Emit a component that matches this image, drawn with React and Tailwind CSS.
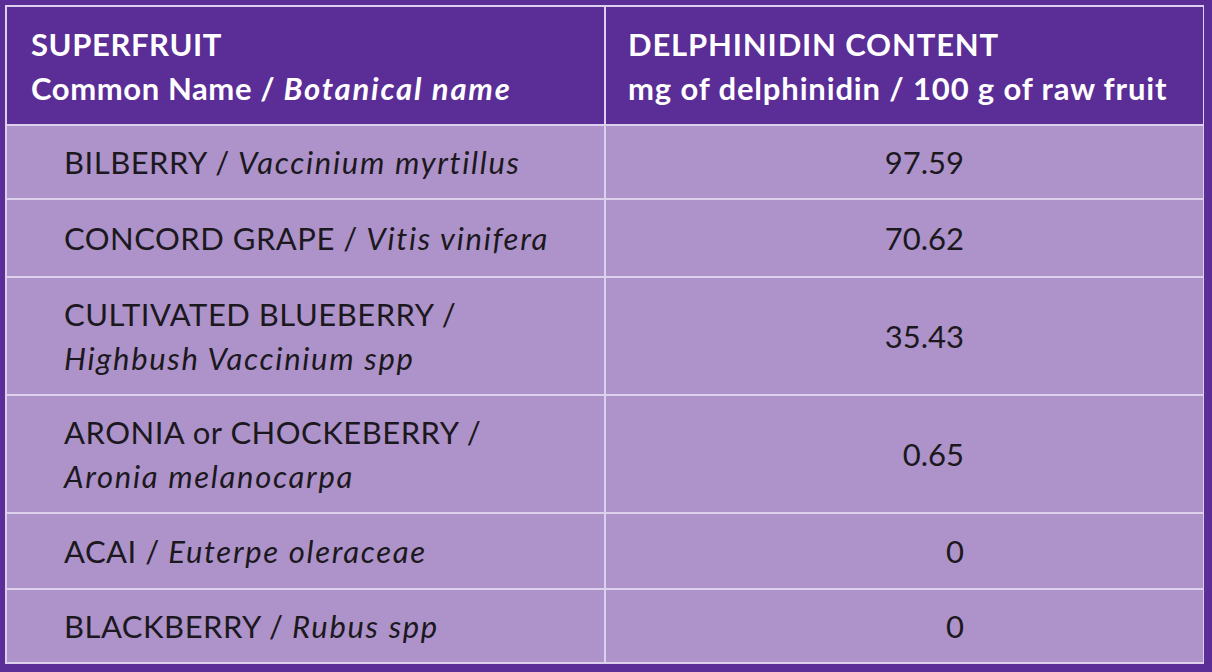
const rows = [
  { name: 'BILBERRY', botanical: 'Vaccinium myrtillus', value: '97.59' },
  { name: 'CONCORD GRAPE', botanical: 'Vitis vinifera', value: '70.62' },
  { name: 'CULTIVATED BLUEBERRY', botanical: 'Highbush Vaccinium spp', value: '35.43', wrap: true },
  { name: 'ARONIA or CHOCKEBERRY', botanical: 'Aronia melanocarpa', value: '0.65', wrap: true },
  { name: 'ACAI', botanical: 'Euterpe oleraceae', value: '0' },
  { name: 'BLACKBERRY', botanical: 'Rubus spp', value: '0' },
];

const App = () => {
  return (
    <div
      className="w-[1212px] h-[672px] bg-[#5b2d96] p-[5px]"
      style={{ fontFamily: 'Lato, "Noto Sans", sans-serif' }}
    >
      <div className="grid grid-cols-[597px_597px] grid-rows-[117px_72px_76px_116px_116px_74px_72px] gap-[2px] p-[2px] bg-[#ddd0ec] w-[1199px]">
        <div className="bg-[#5b2d96] text-white font-bold text-[31px] leading-[44px] tracking-[0.6px] pl-[24px] flex flex-col justify-center">
          <div>SUPERFRUIT</div>
          <div>
            Common Name / <span className="italic tracking-[1.8px]">Botanical name</span>
          </div>
        </div>
        <div className="bg-[#5b2d96] text-white font-bold text-[31px] leading-[44px] tracking-[0.85px] pl-[22px] flex flex-col justify-center">
          <div>DELPHINIDIN CONTENT</div>
          <div>mg of delphinidin / 100 g of raw fruit</div>
        </div>

        {rows.map((r) => (
          <div key={r.name} className="contents">
            <div className="bg-[#ad93c9] text-[#1c1820] text-[31px] leading-[44px] tracking-[0.5px] pl-[57px] flex flex-col justify-center">
              {r.wrap ? (
                <>
                  <div>{r.name} /</div>
                  <div className="italic tracking-[1.7px]">{r.botanical}</div>
                </>
              ) : (
                <div>
                  {r.name} / <span className="italic tracking-[1.7px]">{r.botanical}</span>
                </div>
              )}
            </div>
            <div className="bg-[#ad93c9] text-[#1c1820] text-[31px] leading-[44px] pr-[239px] flex items-center justify-end">
              {r.value}
            </div>
          </div>
        ))}
      </div>
    </div>
  );
};

export default App;
